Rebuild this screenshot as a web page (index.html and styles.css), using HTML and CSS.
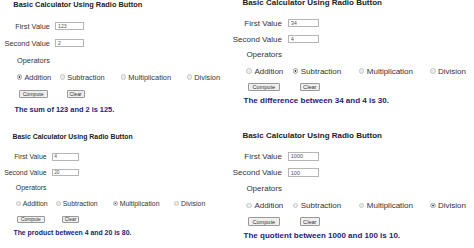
FILE: index.html
```html
<!DOCTYPE html>
<html lang="en">
<head>
  <meta charset="UTF-8" />
  <title>Basic Calculator Using Radio Button</title>
  <link rel="stylesheet" href="styles.css">
</head>
<body>

<div class="sheet">

  <!-- addition -->
  <div class="panel p1">
    <h2 class="title">Basic Calculator Using Radio Button</h2>
    <div class="field"><label class="label">First Value</label><input class="box" type="text" value="123"></div>
    <div class="field"><label class="label">Second Value</label><input class="box" type="text" value="2"></div>
    <div class="ops">Operators</div>
    <div class="choices">
      <span class="choice"><span class="dot on"></span>Addition</span>
      <span class="choice"><span class="dot"></span>Subtraction</span>
      <span class="choice"><span class="dot"></span>Multiplication</span>
      <span class="choice"><span class="dot"></span>Division</span>
    </div>
    <div class="actions"><button class="btn">Compute</button><button class="btn btn-clear">Clear</button></div>
    <p class="answer">The sum of 123 and 2 is 125.</p>
  </div>

  <!-- subtraction -->
  <div class="panel p2">
    <h2 class="title">Basic Calculator Using Radio Button</h2>
    <div class="field"><label class="label">First Value</label><input class="box" type="text" value="34"></div>
    <div class="field"><label class="label">Second Value</label><input class="box" type="text" value="4"></div>
    <div class="ops">Operators</div>
    <div class="choices">
      <span class="choice"><span class="dot"></span>Addition</span>
      <span class="choice"><span class="dot on"></span>Subtraction</span>
      <span class="choice"><span class="dot"></span>Multiplication</span>
      <span class="choice"><span class="dot"></span>Division</span>
    </div>
    <div class="actions"><button class="btn">Compute</button><button class="btn btn-clear">Clear</button></div>
    <p class="answer">The difference between 34 and 4 is 30.</p>
  </div>

  <!-- multiplication -->
  <div class="panel p3">
    <h2 class="title">Basic Calculator Using Radio Button</h2>
    <div class="field"><label class="label">First Value</label><input class="box" type="text" value="4"></div>
    <div class="field"><label class="label">Second Value</label><input class="box" type="text" value="20"></div>
    <div class="ops">Operators</div>
    <div class="choices">
      <span class="choice"><span class="dot"></span>Addition</span>
      <span class="choice"><span class="dot"></span>Subtraction</span>
      <span class="choice"><span class="dot on"></span>Multiplication</span>
      <span class="choice"><span class="dot"></span>Division</span>
    </div>
    <div class="actions"><button class="btn">Compute</button><button class="btn btn-clear">Clear</button></div>
    <p class="answer">The product between 4 and 20 is 80.</p>
  </div>

  <!-- division -->
  <div class="panel p4">
    <h2 class="title">Basic Calculator Using Radio Button</h2>
    <div class="field"><label class="label">First Value</label><input class="box" type="text" value="1000"></div>
    <div class="field"><label class="label">Second Value</label><input class="box" type="text" value="100"></div>
    <div class="ops">Operators</div>
    <div class="choices">
      <span class="choice"><span class="dot"></span>Addition</span>
      <span class="choice"><span class="dot"></span>Subtraction</span>
      <span class="choice"><span class="dot"></span>Multiplication</span>
      <span class="choice"><span class="dot on"></span>Division</span>
    </div>
    <div class="actions"><button class="btn">Compute</button><button class="btn btn-clear">Clear</button></div>
    <p class="answer">The quotient between 1000 and 100 is 10.</p>
  </div>

</div>

</body>
</html>
```

FILE: styles.css
```css
body {
  margin: 0;
  background: #fff;
  font-family: "Liberation Sans", Arial, sans-serif;
  color: #333;
}
.sheet {
  display: grid;
  grid-template-columns: 228px 246px;
  grid-template-rows: 124px 124px;
  width: 474px;
  height: 248px;
}
.panel {
  overflow: hidden;
  font-size: var(--fs);
}
/* each screenshot in the collage has its own scale */
.p1 { --fs: 7.4px; --ty: 5px;  --rh: 17px; }
.p2 { --fs: 8px;   --ty: 3px;  --rh: 16px; }
.p3 { --fs: 6.9px; --ty: 13px; --rh: 15.7px; }
.p4 { --fs: 8px;   --ty: 12px; --rh: 16.4px; }

.title {
  margin: calc(var(--ty) - 5px) 0 calc(var(--rh) / 2 - 1px) 1.8em;
  height: 10px;
  line-height: 10px;
  font-size: 1em;
  font-weight: bold;
  color: #222;
  white-space: nowrap;
}
.field {
  display: flex;
  align-items: center;
  height: var(--rh);
}
.label {
  width: 6.75em;
  margin-right: .75em;
  text-align: right;
  white-space: nowrap;
}
.box {
  box-sizing: border-box;
  width: 5.6em;
  height: 1.6em;
  padding: 0 .3em;
  font-size: .7em;
  font-family: inherit;
  color: #555;
  border: 1px solid #b5b5b5;
  background: #fff;
}
.ops {
  height: var(--rh);
  line-height: var(--rh);
  padding-left: 2.3em;
}
.choices {
  display: grid;
  grid-template-columns: 5.8em 8.25em 8.9em auto;
  align-items: center;
  height: var(--rh);
  padding-left: 2.3em;
  white-space: nowrap;
}
.choice {
  display: flex;
  align-items: center;
  gap: .3em;
}
.dot {
  box-sizing: border-box;
  width: .7em;
  height: .7em;
  border-radius: 50%;
  border: 1px solid #c8c8c8;
  background: #ececec;
}
.dot.on {
  border-color: #a8a8a8;
  background: radial-gradient(circle, #444 0, #444 28%, #e4e4e4 45%);
}
.actions {
  display: flex;
  align-items: center;
  height: var(--rh);
  padding-left: 2.5em;
}
.btn {
  box-sizing: border-box;
  width: 5.65em;
  height: 1.6em;
  padding: 0;
  font-size: .7em;
  font-family: inherit;
  color: #333;
  background: #efefef;
  border: 1px solid #999;
  border-radius: 1px;
}
.btn-clear {
  width: 3.5em;
  margin-left: 3.64em;
}
.answer {
  margin: 0;
  height: calc(var(--rh) - 4px);
  line-height: calc(var(--rh) - 4px);
  padding-left: 1.95em;
  font-weight: bold;
  color: #22227e;
  white-space: nowrap;
}
```
